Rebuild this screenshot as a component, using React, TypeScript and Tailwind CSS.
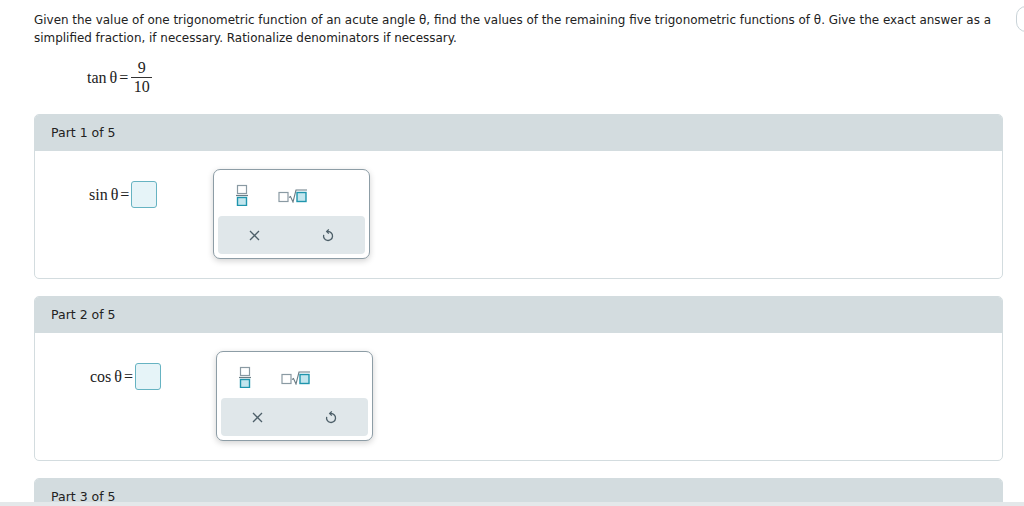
import React from "react";

const sans = { fontFamily: '"DejaVu Sans", Verdana, sans-serif' };
const serif = { fontFamily: '"Liberation Serif", "Times New Roman", serif' };

function FracIcon() {
  return (
    <svg width="12" height="22" viewBox="0 0 12 22">
      <rect x="1.5" y="1.5" width="9" height="8" fill="none" stroke="#8a9aa3" strokeWidth="1.2" />
      <line x1="0" y1="11.5" x2="12" y2="11.5" stroke="#6b7c85" strokeWidth="1.2" />
      <rect x="1.5" y="13.5" width="9" height="8" fill="#c3e6ee" stroke="#1f95ad" strokeWidth="1.4" />
    </svg>
  );
}

function SqrtIcon() {
  return (
    <svg width="30" height="14" viewBox="0 0 30 14">
      <rect x="1" y="3.5" width="9" height="9" fill="none" stroke="#8a9aa3" strokeWidth="1.2" />
      <path d="M11 8.5 L12.5 7.5 L15 13 L18 1 L29 1" fill="none" stroke="#6b7c85" strokeWidth="1.1" />
      <rect x="19" y="3.5" width="9" height="9" fill="#c3e6ee" stroke="#1f95ad" strokeWidth="1.4" />
    </svg>
  );
}

function XIcon() {
  return (
    <svg width="11" height="11" viewBox="0 0 11 11">
      <path d="M1 1 L10 10 M10 1 L1 10" stroke="#4d5f69" strokeWidth="1.3" fill="none" />
    </svg>
  );
}

function UndoIcon() {
  return (
    <svg width="12" height="14" viewBox="0 0 12 14">
      <path d="M4.8 3.5 L6 3.5 A4.5 4.5 0 1 1 1.7 6.8" fill="none" stroke="#4d5f69" strokeWidth="1.3" />
      <path d="M6.8 1.4 L4.7 3.5 L6.8 5.6" fill="none" stroke="#4d5f69" strokeWidth="1.3" />
    </svg>
  );
}

function Palette({ ml }: { ml: string }) {
  return (
    <div
      className={`${ml} w-[157px] h-[90px] rounded-[7px] border border-[#8d9da6] bg-white p-[4px] shadow-[0_2px_6px_rgba(0,0,0,0.18)] flex flex-col`}
    >
      <div className="flex items-center h-[42px] pl-[18px]">
        <div className="w-[12px] flex justify-center"><FracIcon /></div>
        <div className="ml-[30px] mt-[1px]"><SqrtIcon /></div>
      </div>
      <div className="flex-1 rounded-[4px] bg-[#e0e7ea] flex items-center">
        <div className="ml-[31px]"><XIcon /></div>
        <div className="ml-[62px]"><UndoIcon /></div>
      </div>
    </div>
  );
}

function Part({
  n,
  fn,
  padLeft,
  paletteMl,
}: {
  n: number;
  fn: string;
  padLeft: string;
  paletteMl: string;
}) {
  return (
    <div className="rounded-[5px] border border-[#d3dcdf] bg-white">
      <div className="h-[36px] bg-[#d3dcdf] rounded-t-[4px] flex items-center pl-[16px] text-[12.5px] text-[#222]" style={sans}>
        Part {n} of 5
      </div>
      <div className={`h-[127px] flex items-start pt-[18px] ${padLeft}`}>
        <div className="flex items-center mt-[12px]">
          <span className="text-[16px] text-[#222]" style={serif}>
            {fn}
            <span className="ml-[3px]">θ</span>
            <span className="ml-[2px]">=</span>
          </span>
          <div className="ml-[2px] w-[26px] h-[27px] rounded-[3px] border-[1.5px] border-[#66b3c2] bg-[#e6f4f8]" />
        </div>
        <Palette ml={paletteMl} />
      </div>
    </div>
  );
}

export default function App() {
  return (
    <div className="relative w-[1024px] h-[506px] overflow-hidden bg-white">
      <div className="absolute right-[-12px] top-[6px] w-[20px] h-[26px] rounded-full border border-[#c9d3d8]" />
      <div className="pl-[34px] pr-[21px] pt-[11px]">
        <p className="text-[11.95px] leading-[18px] text-[#222] mr-[-14px]" style={sans}>
          Given the value of one trigonometric function of an acute angle θ, find the values of the remaining five trigonometric functions of θ. Give the exact answer as a simplified fraction, if necessary. Rationalize denominators if necessary.
        </p>
        <div className="flex items-center pl-[53px] mt-[12px] text-[16px] text-[#222]" style={serif}>
          <span>tan</span>
          <span className="ml-[3px]">θ</span>
          <span className="ml-[2px]">=</span>
          <span className="ml-[3px] inline-flex flex-col items-center leading-[18px]">
            <span>9</span>
            <span className="w-[21px] h-px bg-[#333]" />
            <span>10</span>
          </span>
        </div>
        <div className="mt-[18px] flex flex-col gap-[17px]">
          <Part n={1} fn="sin" padLeft="pl-[54px]" paletteMl="ml-[56px]" />
          <Part n={2} fn="cos" padLeft="pl-[55px]" paletteMl="ml-[55px]" />
          <Part n={3} fn="tan" padLeft="pl-[55px]" paletteMl="ml-[55px]" />
        </div>
      </div>
      <div className="absolute left-0 right-0 bottom-0 h-[4px] bg-[#e4e8ea]" />
    </div>
  );
}
